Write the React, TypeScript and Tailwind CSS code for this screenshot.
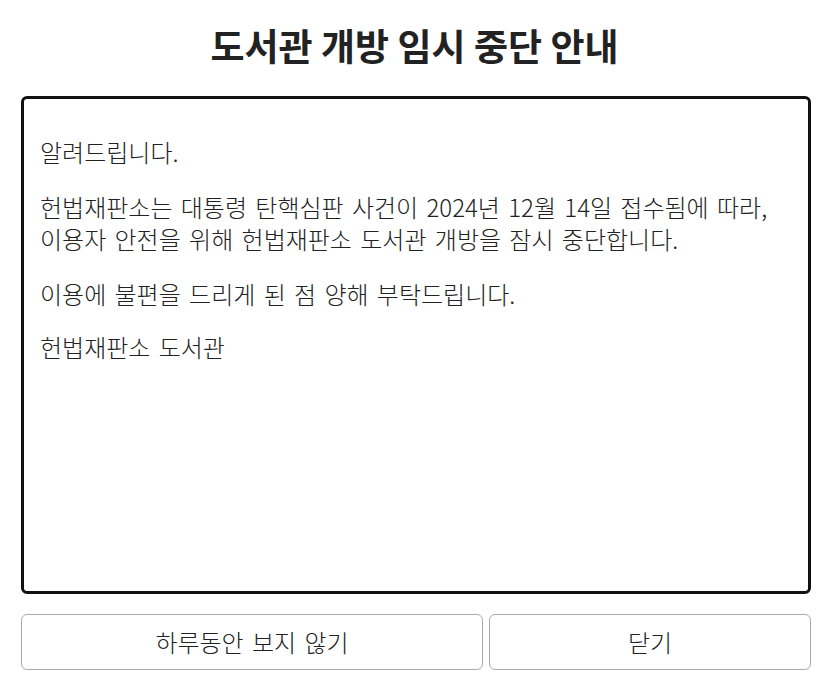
export default function App() {
  return (
    <div className="w-[829px] h-[685px] bg-white text-[#222] flex flex-col" style={{ fontFamily: '"Noto Sans CJK KR", "Noto Sans", sans-serif' }}>
      <h1 className="text-center text-[37px] font-semibold leading-none pt-[27px] h-[96px] text-[#222]">도서관 개방 임시 중단 안내</h1>
      <div className="ml-[21px] w-[790px] h-[498px] border-[3px] border-[#111] rounded-[6px] px-[16px] pt-[37px] text-[24px] leading-[32px] font-light text-[#222] [word-spacing:3px]">
        <p className="mb-[23px]">알려드립니다.</p>
        <p className="mb-[23px]">헌법재판소는 대통령 탄핵심판 사건이 2024년 12월 14일 접수됨에 따라,<br />이용자 안전을 위해 헌법재판소 도서관 개방을 잠시 중단합니다.</p>
        <p className="mb-[21px]">이용에 불편을 드리게 된 점 양해 부탁드립니다.</p>
        <p>헌법재판소 도서관</p>
      </div>
      <div className="ml-[21px] w-[790px] mt-[20px] flex gap-[6px]">
        <button className="w-[462px] h-[56px] border border-[#aaa] rounded-[6px] text-[24px] font-light text-[#222] bg-white [word-spacing:3px]">하루동안 보지 않기</button>
        <button className="flex-1 h-[56px] border border-[#aaa] rounded-[6px] text-[24px] font-light text-[#222] bg-white">닫기</button>
      </div>
    </div>
  );
}
